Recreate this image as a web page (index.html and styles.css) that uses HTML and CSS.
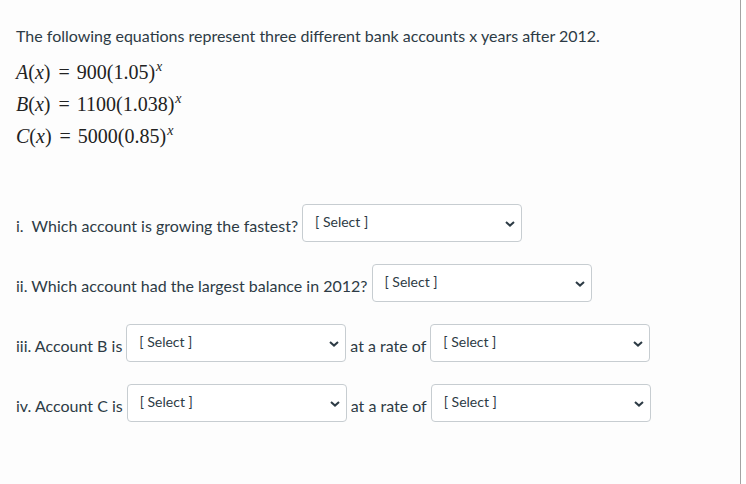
FILE: index.html
```html
<!DOCTYPE html>
<html>
<head>
<meta charset="utf-8">
<link rel="stylesheet" href="styles.css">
</head>
<body>
<div class="page">
  <p class="intro">The following equations represent three different bank accounts x years after 2012.</p>
  <div class="eqs">
    <div class="eq"><i>A</i>(<i>x</i>)<span class="op">=</span>900(1.05)<sup><i>x</i></sup></div>
    <div class="eq"><i>B</i>(<i>x</i>)<span class="op">=</span>1100(1.038)<sup><i>x</i></sup></div>
    <div class="eq"><i>C</i>(<i>x</i>)<span class="op">=</span>5000(0.85)<sup><i>x</i></sup></div>
  </div>
  <div class="questions">
    <div class="row">
      <span class="label">i.&nbsp; Which account is growing the fastest?</span>
      <div class="sel"><select><option>[ Select ]</option></select><svg class="chev" viewBox="0 0 10 6" width="10" height="6"><path d="M1 1 L5 4.6 L9 1" fill="none" stroke="#2d3b45" stroke-width="2"/></svg></div>
    </div>
    <div class="row">
      <span class="label">ii. Which account had the largest balance in 2012?</span>
      <div class="sel"><select><option>[ Select ]</option></select><svg class="chev" viewBox="0 0 10 6" width="10" height="6"><path d="M1 1 L5 4.6 L9 1" fill="none" stroke="#2d3b45" stroke-width="2"/></svg></div>
    </div>
    <div class="row">
      <span class="label">iii. Account B is</span>
      <div class="sel"><select><option>[ Select ]</option></select><svg class="chev" viewBox="0 0 10 6" width="10" height="6"><path d="M1 1 L5 4.6 L9 1" fill="none" stroke="#2d3b45" stroke-width="2"/></svg></div>
      <span class="label">at a rate of</span>
      <div class="sel"><select><option>[ Select ]</option></select><svg class="chev" viewBox="0 0 10 6" width="10" height="6"><path d="M1 1 L5 4.6 L9 1" fill="none" stroke="#2d3b45" stroke-width="2"/></svg></div>
    </div>
    <div class="row">
      <span class="label">iv. Account C is</span>
      <div class="sel"><select><option>[ Select ]</option></select><svg class="chev" viewBox="0 0 10 6" width="10" height="6"><path d="M1 1 L5 4.6 L9 1" fill="none" stroke="#2d3b45" stroke-width="2"/></svg></div>
      <span class="label">at a rate of</span>
      <div class="sel"><select><option>[ Select ]</option></select><svg class="chev" viewBox="0 0 10 6" width="10" height="6"><path d="M1 1 L5 4.6 L9 1" fill="none" stroke="#2d3b45" stroke-width="2"/></svg></div>
    </div>
  </div>
</div>
</body>
</html>
```
FILE: styles.css
```css
html, body {
  margin: 0;
  padding: 0;
  background: #ffffff;
}
body {
  font-family: Lato, "Liberation Sans", sans-serif;
  color: #2d3b45;
}
.page {
  width: 741px;
  height: 484px;
  box-sizing: border-box;
  padding: 24px 0 0 16px;
  border-right: 1px solid #a3a3a3;
  background: #fdfdfd;
}
.intro {
  margin: 0;
  font-size: 16px;
  line-height: 24px;
}
.eqs {
  margin-top: 8px;
  font-family: "Liberation Serif", "DejaVu Serif", serif;
  font-size: 20px;
  color: #222;
}
.eq {
  height: 32px;
  line-height: 32px;
  padding-left: 0;
}
.eq .op {
  margin: 0 7px 0 8px;
}
.eq sup {
  font-size: 14px;
  vertical-align: 8px;
  line-height: 0;
  margin-left: 1px;
}
.questions {
  margin-top: 52px;
  display: flex;
  flex-direction: column;
  gap: 22px;
}
.row {
  display: flex;
  align-items: center;
  gap: 4px;
  height: 38px;
}
.label {
  font-size: 16px;
  line-height: 24px;
  padding-top: 6px;
  white-space: nowrap;
}
.sel {
  position: relative;
  width: 220px;
  height: 38px;
}
.sel select {
  -webkit-appearance: none;
  appearance: none;
  width: 100%;
  height: 38px;
  box-sizing: border-box;
  border: 1px solid #c7cdd1;
  border-radius: 4px;
  background: #ffffff;
  font-family: Lato, "Liberation Sans", sans-serif;
  font-size: 14px;
  line-height: 20px;
  color: #2d3b45;
  padding: 7px 30px 9px 12px;
  margin: 0;
}
.chev {
  position: absolute;
  right: 7px;
  top: 17px;
  pointer-events: none;
}
```
